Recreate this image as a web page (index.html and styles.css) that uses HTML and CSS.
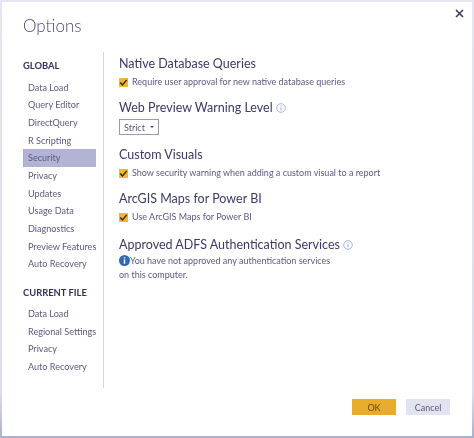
FILE: index.html
```html
<!DOCTYPE html>
<html lang="en">
<head>
<meta charset="utf-8">
<title>Options</title>
<link rel="stylesheet" href="styles.css">
</head>
<body>
<div class="dialog">
  <button class="close" aria-label="Close">
    <svg width="9" height="9" viewBox="0 0 9 9"><path d="M1 1l7 7M8 1L1 8" stroke="#35355f" stroke-width="1.5" fill="none"/></svg>
  </button>
  <h1 class="title">Options</h1>
  <div class="body">
    <nav class="nav">
      <h2 class="nav-head">GLOBAL</h2>
      <a class="nav-item">Data Load</a>
      <a class="nav-item">Query Editor</a>
      <a class="nav-item">DirectQuery</a>
      <a class="nav-item">R Scripting</a>
      <a class="nav-item active">Security</a>
      <a class="nav-item">Privacy</a>
      <a class="nav-item">Updates</a>
      <a class="nav-item">Usage Data</a>
      <a class="nav-item">Diagnostics</a>
      <a class="nav-item">Preview Features</a>
      <a class="nav-item">Auto Recovery</a>
      <h2 class="nav-head second">CURRENT FILE</h2>
      <a class="nav-item">Data Load</a>
      <a class="nav-item">Regional Settings</a>
      <a class="nav-item">Privacy</a>
      <a class="nav-item">Auto Recovery</a>
    </nav>
    <main class="main">
      <section class="sec s1">
        <h3 class="sec-head">Native Database Queries</h3>
        <label class="check"><span class="box"><svg width="9" height="9" viewBox="0 0 9 9"><path d="M1.2 4.6l2.2 2.3 4.3-4.8" stroke="#3a2c10" stroke-width="1.5" fill="none"/></svg></span>Require user approval for new native database queries</label>
      </section>
      <section class="sec s2">
        <h3 class="sec-head">Web Preview Warning Level <svg class="hint" width="10" height="10" viewBox="0 0 10 10"><circle cx="5" cy="5" r="4.3" fill="none" stroke="#8f9fd0" stroke-width=".8"/><path d="M5 4.2v3.2M5 2.4v1" stroke="#8f9fd0" stroke-width=".9"/></svg></h3>
        <div class="select">Strict <span class="caret"></span></div>
      </section>
      <section class="sec s3">
        <h3 class="sec-head">Custom Visuals</h3>
        <label class="check"><span class="box"><svg width="9" height="9" viewBox="0 0 9 9"><path d="M1.2 4.6l2.2 2.3 4.3-4.8" stroke="#3a2c10" stroke-width="1.5" fill="none"/></svg></span>Show security warning when adding a custom visual to a report</label>
      </section>
      <section class="sec s4">
        <h3 class="sec-head">ArcGIS Maps for Power BI</h3>
        <label class="check"><span class="box"><svg width="9" height="9" viewBox="0 0 9 9"><path d="M1.2 4.6l2.2 2.3 4.3-4.8" stroke="#3a2c10" stroke-width="1.5" fill="none"/></svg></span>Use ArcGIS Maps for Power BI</label>
      </section>
      <section class="sec s5">
        <h3 class="sec-head">Approved ADFS Authentication Services <svg class="hint" width="10" height="10" viewBox="0 0 10 10"><circle cx="5" cy="5" r="4.3" fill="none" stroke="#8f9fd0" stroke-width=".8"/><path d="M5 4.2v3.2M5 2.4v1" stroke="#8f9fd0" stroke-width=".9"/></svg></h3>
        <p class="note"><svg class="note-icon" width="11" height="11" viewBox="0 0 11 11"><circle cx="5.5" cy="5.5" r="5.5" fill="#2f68b8"/><path d="M5.5 4.6v4.2M5.5 2.2v1.4" stroke="#fff" stroke-width="1.4"/></svg>You have not approved any authentication services<br>on this computer.</p>
      </section>
    </main>
  </div>
  <footer class="footer">
    <button class="btn ok">OK</button>
    <button class="btn cancel">Cancel</button>
  </footer>
</div>
</body>
</html>
```
FILE: styles.css
```css
html, body { margin: 0; height: 100%; }
body {
  background: linear-gradient(to bottom, #e4e4f2 0, #dcdcee 90%, #aab0cc 100%);
  padding: 2px;
  box-sizing: border-box;
  font-family: "Lato", "Open Sans", sans-serif;
  color: #4c4c72;
  overflow: hidden;
}
.dialog {
  position: relative;
  background: #fff;
  height: 434px;
  box-sizing: border-box;
  filter: blur(.4px);
}
.close {
  position: absolute;
  right: 7px;
  top: 4px;
  border: 0;
  background: none;
  padding: 0;
  width: 12px;
  height: 12px;
}
.title {
  margin: 0;
  padding: 11px 0 0 21px;
  height: 39px;
  box-sizing: border-box;
  font-size: 17px;
  line-height: 26px;
  font-weight: 300;
  color: #4a4a70;
}
.body { display: flex; margin-top: 11px; }
.nav {
  width: 102px;
  height: 336px;
  box-sizing: border-box;
  border-right: 1px solid #d6d6e4;
  display: flex;
  flex-direction: column;
  align-items: flex-start;
  padding: 5px 0 0 21px;
}
.nav-head {
  margin: 0 0 4.5px;
  font-size: 9.4px;
  line-height: 17px;
  font-weight: 700;
  color: #33335a;
}
.nav-head.second { margin-top: 10.5px; }
.nav-item {
  display: block;
  box-sizing: border-box;
  width: 73px;
  height: 17.7px;
  line-height: 17.7px;
  font-size: 9.1px;
  white-space: nowrap;
  padding-left: 4px;
  border-left: 1px solid transparent;
  color: #5a5a7e;
}
.nav-item.active { background: #b3b3d6; border-left-color: #e6ad28; }
.main { flex: 1; padding-left: 15px; }
.sec-head {
  margin: 0;
  font-size: 12.5px;
  line-height: 18px;
  font-weight: 400;
  color: #3a3a64;
  white-space: nowrap;
}
.hint { vertical-align: -1px; }
.s1 { margin-top: 3px; }
.s2 { margin-top: 8px; }
.s3 { margin-top: 10px; }
.s4 { margin-top: 8px; }
.s5 { margin-top: 10px; }
.check {
  display: flex;
  align-items: center;
  gap: 4px;
  font-size: 9px;
  line-height: 18px;
  color: #5a5a7e;
  white-space: nowrap;
}
.box {
  width: 9px;
  height: 9px;
  background: #eeb92c;
  display: block;
  line-height: 0;
}
.select {
  display: flex;
  align-items: center;
  gap: 5px;
  width: 40px;
  height: 16px;
  margin-top: 2px;
  box-sizing: border-box;
  border: 1px solid #9a9ab6;
  padding-left: 4px;
  font-size: 9px;
  color: #5a5a7e;
}
.caret {
  width: 0;
  height: 0;
  border: 2.5px solid transparent;
  border-top: 2.5px solid #4a4a70;
  border-bottom: 0;
}
.s3 { margin-top: 11px; }
.note {
  margin: 0;
  font-size: 9px;
  line-height: 14px;
  color: #5a5a7e;
  white-space: nowrap;
}
.note-icon { vertical-align: -2px; }
.footer {
  position: absolute;
  right: 22px;
  bottom: 21px;
  display: flex;
  gap: 10px;
}
.btn {
  width: 44px;
  height: 16px;
  border: 0;
  padding: 0;
  font-family: inherit;
  font-size: 9px;
  color: #5a5a7e;
}
.ok { background: #e8ab2a; color: #6a4a10; }
.cancel { background: #e3e3ef; }
```
